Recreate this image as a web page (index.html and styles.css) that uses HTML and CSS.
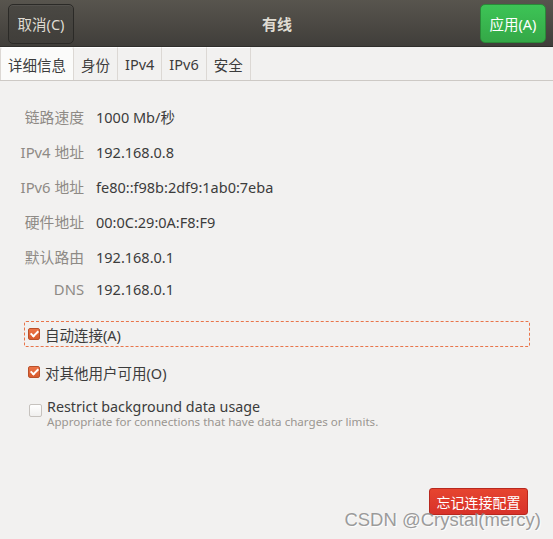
FILE: index.html
```html
<!DOCTYPE html>
<html lang="zh-CN">
<head>
    <meta charset="UTF-8">
    <meta name="viewport" content="width=device-width, initial-scale=1.0">
    <title>有线</title>
    <link rel="stylesheet" href="styles.css">
</head>
<body>
    <div class="dialog">
        <header class="titlebar">
            <button class="btn btn-cancel">取消(C)</button>
            <h1 class="title">有线</h1>
            <button class="btn btn-apply">应用(A)</button>
        </header>

        <nav class="tabs">
            <div class="tab active">详细信息</div>
            <div class="tab">身份</div>
            <div class="tab">IPv4</div>
            <div class="tab">IPv6</div>
            <div class="tab">安全</div>
        </nav>

        <div class="content">
            <dl class="details">
                <dt>链路速度</dt><dd>1000 Mb/秒</dd>
                <dt>IPv4 地址</dt><dd>192.168.0.8</dd>
                <dt>IPv6 地址</dt><dd>fe80::f98b:2df9:1ab0:7eba</dd>
                <dt>硬件地址</dt><dd>00:0C:29:0A:F8:F9</dd>
                <dt>默认路由</dt><dd>192.168.0.1</dd>
                <dt>DNS</dt><dd>192.168.0.1</dd>
            </dl>

            <div class="options">
                <label class="check focused">
                    <span class="box checked"></span>
                    <span>自动连接(A)</span>
                </label>
                <label class="check">
                    <span class="box checked"></span>
                    <span>对其他用户可用(O)</span>
                </label>
                <label class="check two-line">
                    <span class="box"></span>
                    <span class="check-text">
                        <span>Restrict background data usage</span>
                        <span class="hint">Appropriate for connections that have data charges or limits.</span>
                    </span>
                </label>
            </div>

            <div class="actions">
                <button class="btn btn-forget">忘记连接配置</button>
            </div>
        </div>

        <div class="watermark">CSDN @Crystal(mercy)</div>
    </div>
</body>
</html>
```

FILE: styles.css
```css
* {
    box-sizing: border-box;
}

body {
    margin: 0;
    background-color: #f2f1f0;
    font-family: "Noto Sans", "Noto Sans CJK SC", sans-serif;
    color: #3c3c3c;
}

.dialog {
    position: relative;
    width: 553px;
    height: 539px;
    overflow: hidden;
    display: flex;
    flex-direction: column;
}

/* заголовок окна */
.titlebar {
    height: 47px;
    display: flex;
    align-items: center;
    justify-content: space-between;
    padding: 0 7px 0 8px;
    background: linear-gradient(#58554e, #403e3a);
    border-bottom: 1px solid #2f2e2b;
}

.title {
    margin: 0;
    font-size: 15px;
    font-weight: bold;
    color: #dfdbd2;
}

.btn {
    font-family: inherit;
    font-size: 14.5px;
    border-radius: 5px;
    cursor: pointer;
    padding: 0;
}

.btn-cancel {
    width: 66px;
    height: 40px;
    margin-top: 1px;
    background: linear-gradient(#4a4843, #403e3a);
    border: 1px solid #2b2a27;
    color: #dfdbd2;
    box-shadow: inset 0 1px 0 rgba(255, 255, 255, 0.06);
}

.btn-apply {
    width: 66px;
    height: 39px;
    margin-top: 1px;
    background: linear-gradient(#3dc456, #34a847);
    border: 1px solid #2a8a38;
    color: #ffffff;
}

/* вкладки */
.tabs {
    height: 34px;
    display: flex;
    background-color: #f2f1f0;
    border-bottom: 1px solid #cdc9c5;
}

.tab {
    padding: 0 7px;
    display: flex;
    align-items: center;
    font-size: 14.5px;
    color: #3c3c3c;
    border-right: 1px solid #dcd8d4;
    border-top: 1px solid #ffffff;
}

.tab.active {
    padding: 0 7px;
    background-color: #fbfbfa;
    border-left: 1px solid #dcd8d4;
    border-top-left-radius: 3px;
    border-top-right-radius: 3px;
}

.content {
    flex: 1;
    display: flex;
    flex-direction: column;
}

/* сведения о соединении */
.details {
    margin: 25px 0 0;
    display: grid;
    grid-template-columns: 84px 1fr;
    column-gap: 12px;
    row-gap: 13px;
    line-height: 22px;
}

.details dt {
    text-align: right;
    font-size: 14.8px;
    color: #8e8a85;
}

.details dd {
    margin: 0;
    font-size: 14.5px;
    color: #3c3c3c;
}

.details dt:nth-last-of-type(1),
.details dd:nth-last-of-type(1) {
    margin-top: -3px;
}

/* флажки */
.options {
    margin: 21px 23px 0 24px;
    display: flex;
    flex-direction: column;
    gap: 12px;
}

.check {
    display: flex;
    align-items: center;
    gap: 5px;
    height: 26px;
    padding-left: 3px;
    font-size: 14.5px;
    color: #3c3c3c;
    border: 1px dashed transparent;
    border-radius: 2px;
}

.check.focused {
    border-color: #e9754a;
}

.check.two-line {
    height: auto;
    align-items: flex-start;
    padding-top: 0;
    padding-left: 4px;
}

.box {
    width: 12px;
    height: 12px;
    flex: none;
    border-radius: 2px;
    border: 1px solid #c6c2be;
    background: linear-gradient(#ffffff, #f0efee);
}

.box.checked {
    position: relative;
    border-color: #b9502a;
    background: linear-gradient(#ec7447, #d85a2d);
}

.box.checked::after {
    content: "";
    position: absolute;
    left: 3px;
    top: 0px;
    width: 3px;
    height: 6px;
    border: solid #ffffff;
    border-width: 0 2px 2px 0;
    transform: rotate(45deg);
}

.two-line .box {
    margin-top: 6px;
    width: 13px;
    height: 13px;
}

.check-text {
    display: flex;
    flex-direction: column;
    font-size: 14.3px;
    line-height: 17px;
}

.hint {
    font-size: 11.6px;
    line-height: 13px;
    color: #9a9691;
}

.actions {
    margin-top: auto;
    display: flex;
    justify-content: flex-end;
    padding: 0 25px 24px 0;
}

.btn-forget {
    width: 99px;
    height: 27px;
    border-radius: 3px;
    background: linear-gradient(#e6452f, #d8322a);
    border: 1px solid #b8281e;
    color: #ffffff;
    font-size: 14px;
}

/* водяной знак поверх окна */
.watermark {
    position: absolute;
    right: 12px;
    bottom: 8px;
    font-family: "Liberation Sans", "Noto Sans", sans-serif;
    font-size: 18.5px;
    color: rgba(130, 130, 130, 0.8);
    text-shadow: 1px 1px 1px rgba(255, 255, 255, 0.9);
    pointer-events: none;
}
```
